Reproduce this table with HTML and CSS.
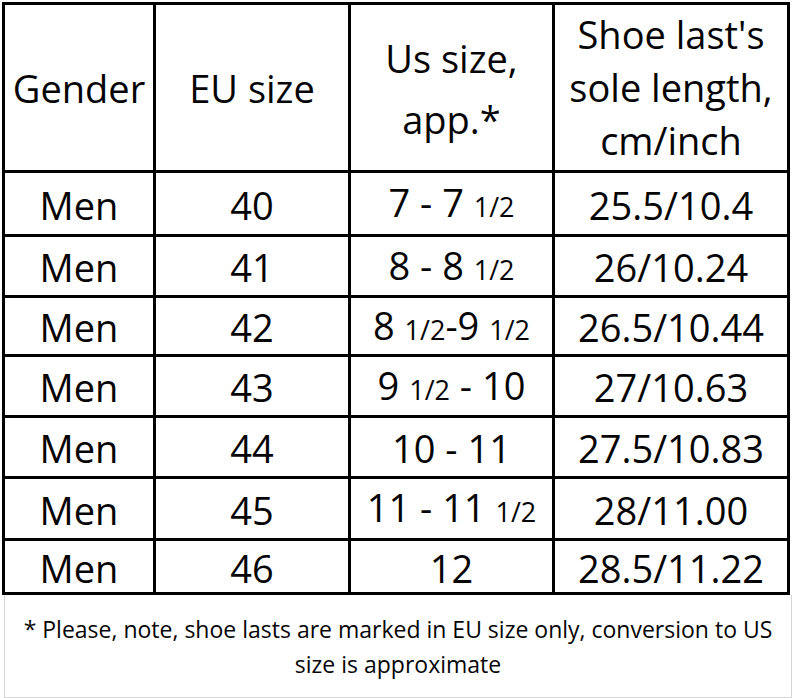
FILE: index.html
```html
<!DOCTYPE html>
<html>
<head>
<meta charset="utf-8">
<link rel="stylesheet" href="styles.css">
</head>
<body>
<div class="page">
  <div class="sheet">
    <div class="cell head"><span>Gender</span></div>
    <div class="cell head"><span>EU size</span></div>
    <div class="cell head us"><span>Us size,<br>app.*</span></div>
    <div class="cell head last"><span>Shoe last's<br>sole length,<br>cm/inch</span></div>

    <div class="cell"><span>Men</span></div><div class="cell"><span>40</span></div><div class="cell"><span>7 - 7 <span class="frac">1/2</span></span></div><div class="cell"><span>25.5/10.4</span></div>
    <div class="cell"><span>Men</span></div><div class="cell"><span>41</span></div><div class="cell"><span>8 - 8 <span class="frac">1/2</span></span></div><div class="cell"><span>26/10.24</span></div>
    <div class="cell"><span>Men</span></div><div class="cell"><span>42</span></div><div class="cell"><span>8 <span class="frac">1/2</span>-9 <span class="frac">1/2</span></span></div><div class="cell"><span>26.5/10.44</span></div>
    <div class="cell"><span>Men</span></div><div class="cell"><span>43</span></div><div class="cell"><span>9 <span class="frac">1/2</span> - 10</span></div><div class="cell"><span>27/10.63</span></div>
    <div class="cell"><span>Men</span></div><div class="cell"><span>44</span></div><div class="cell"><span>10 - 11</span></div><div class="cell"><span>27.5/10.83</span></div>
    <div class="cell"><span>Men</span></div><div class="cell"><span>45</span></div><div class="cell"><span>11 - 11 <span class="frac">1/2</span></span></div><div class="cell"><span>28/11.00</span></div>
    <div class="cell"><span>Men</span></div><div class="cell"><span>46</span></div><div class="cell"><span>12</span></div><div class="cell"><span>28.5/11.22</span></div>
  </div>
  <div class="note"><span>* Please, note, shoe lasts are marked in EU size only, conversion to US<br>size is approximate</span></div>
  <div class="ticks"><span></span><span></span><span></span><span></span></div>
</div>
</body>
</html>
```
FILE: styles.css
```css
html, body {
  margin: 0;
  padding: 0;
  background: #ffffff;
}
body {
  font-family: "Open Sans", "Noto Sans", sans-serif;
  color: #050505;
}
.page {
  width: 794px;
  height: 698px;
  overflow: hidden;
}
.sheet {
  display: grid;
  grid-template-columns: 148px 192px 201px 232px;
  grid-template-rows: 165px 61px 58px 56px 58px 58px 59px 51px;
  gap: 3px;
  padding: 3px;
  background: #000;
  width: 788px;
  box-sizing: border-box;
  margin: 2px 0 0 2px;
}
.cell {
  background: #fff;
  display: flex;
  align-items: center;
  justify-content: center;
  text-align: center;
  font-size: 38px;
  font-weight: 500;
  line-height: 40px;
  white-space: nowrap;
  padding-top: 2px;
  box-sizing: border-box;
}
.head {
  padding-top: 0;
}
.head.us {
  line-height: 61px;
  padding-top: 2px;
}
.head.last {
  line-height: 53px;
}
.frac {
  font-size: 27px;
}
.note {
  margin: 0 2px 0 4px;
  height: 100px;
  border-left: 1px solid #d6d6d6;
  border-right: 1px solid #d6d6d6;
  border-bottom: 1px solid #d6d6d6;
  display: flex;
  align-items: center;
  justify-content: center;
  text-align: center;
  font-size: 23px;
  font-weight: 500;
  line-height: 35px;
  padding-top: 2px;
  box-sizing: content-box;
}
.ticks {
  display: grid;
  grid-template-columns: 151px 196px 202px 236px;
  margin-left: 4px;
  height: 3px;
}
.ticks span {
  border-left: 1px solid #d6d6d6;
}
```
